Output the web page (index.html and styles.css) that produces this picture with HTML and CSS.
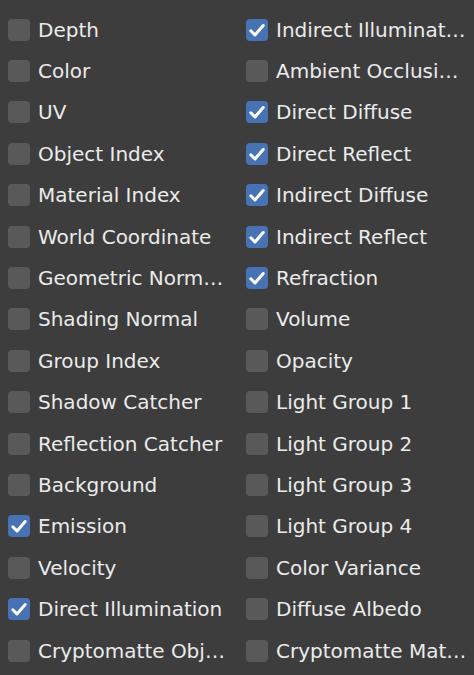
FILE: index.html
```html
<!DOCTYPE html>
<html>
<head>
<meta charset="utf-8">
<link rel="stylesheet" href="styles.css">
</head>
<body>
<div class="panel">
  <div class="col">
    <div class="row"><span class="box"></span><span class="label">Depth</span></div>
    <div class="row"><span class="box"></span><span class="label">Color</span></div>
    <div class="row"><span class="box"></span><span class="label">UV</span></div>
    <div class="row"><span class="box"></span><span class="label">Object Index</span></div>
    <div class="row"><span class="box"></span><span class="label">Material Index</span></div>
    <div class="row"><span class="box"></span><span class="label">World Coordinate</span></div>
    <div class="row"><span class="box"></span><span class="label">Geometric Norm…</span></div>
    <div class="row"><span class="box"></span><span class="label">Shading Normal</span></div>
    <div class="row"><span class="box"></span><span class="label">Group Index</span></div>
    <div class="row"><span class="box"></span><span class="label">Shadow Catcher</span></div>
    <div class="row"><span class="box"></span><span class="label">Reflection Catcher</span></div>
    <div class="row"><span class="box"></span><span class="label">Background</span></div>
    <div class="row"><span class="box on"><svg viewBox="0 0 22 22"><path d="M4.8 11.8 L9 16 L17.2 6.5"/></svg></span><span class="label">Emission</span></div>
    <div class="row"><span class="box"></span><span class="label">Velocity</span></div>
    <div class="row"><span class="box on"><svg viewBox="0 0 22 22"><path d="M4.8 11.8 L9 16 L17.2 6.5"/></svg></span><span class="label">Direct Illumination</span></div>
    <div class="row"><span class="box"></span><span class="label">Cryptomatte Obj…</span></div>
  </div>
  <div class="col">
    <div class="row"><span class="box on"><svg viewBox="0 0 22 22"><path d="M4.8 11.8 L9 16 L17.2 6.5"/></svg></span><span class="label">Indirect Illuminat…</span></div>
    <div class="row"><span class="box"></span><span class="label">Ambient Occlusi…</span></div>
    <div class="row"><span class="box on"><svg viewBox="0 0 22 22"><path d="M4.8 11.8 L9 16 L17.2 6.5"/></svg></span><span class="label">Direct Diffuse</span></div>
    <div class="row"><span class="box on"><svg viewBox="0 0 22 22"><path d="M4.8 11.8 L9 16 L17.2 6.5"/></svg></span><span class="label">Direct Reflect</span></div>
    <div class="row"><span class="box on"><svg viewBox="0 0 22 22"><path d="M4.8 11.8 L9 16 L17.2 6.5"/></svg></span><span class="label">Indirect Diffuse</span></div>
    <div class="row"><span class="box on"><svg viewBox="0 0 22 22"><path d="M4.8 11.8 L9 16 L17.2 6.5"/></svg></span><span class="label">Indirect Reflect</span></div>
    <div class="row"><span class="box on"><svg viewBox="0 0 22 22"><path d="M4.8 11.8 L9 16 L17.2 6.5"/></svg></span><span class="label">Refraction</span></div>
    <div class="row"><span class="box"></span><span class="label">Volume</span></div>
    <div class="row"><span class="box"></span><span class="label">Opacity</span></div>
    <div class="row"><span class="box"></span><span class="label">Light Group 1</span></div>
    <div class="row"><span class="box"></span><span class="label">Light Group 2</span></div>
    <div class="row"><span class="box"></span><span class="label">Light Group 3</span></div>
    <div class="row"><span class="box"></span><span class="label">Light Group 4</span></div>
    <div class="row"><span class="box"></span><span class="label">Color Variance</span></div>
    <div class="row"><span class="box"></span><span class="label">Diffuse Albedo</span></div>
    <div class="row"><span class="box"></span><span class="label">Cryptomatte Mat…</span></div>
  </div>
</div>
</body>
</html>
```
FILE: styles.css
```css
html, body {
  margin: 0;
  padding: 0;
  background: #3d3d3d;
  width: 474px;
  height: 675px;
  overflow: hidden;
}
.panel {
  display: grid;
  grid-template-columns: 238px 236px;
  padding: 9px 0 0 8px;
  font-family: "DejaVu Sans", sans-serif;
  font-size: 20px;
  color: #ebebeb;
}
.col {
  display: flex;
  flex-direction: column;
}
.row {
  height: 41.4px;
  display: flex;
  align-items: center;
  white-space: nowrap;
}
.box {
  width: 22px;
  height: 22px;
  border-radius: 4px;
  background: #595959;
  flex: none;
  margin-right: 8px;
  display: flex;
}
.box.on {
  background: #4772b3;
}
.box svg {
  width: 22px;
  height: 22px;
}
.box svg path {
  fill: none;
  stroke: #ffffff;
  stroke-width: 3;
  stroke-linecap: round;
  stroke-linejoin: round;
}
.label {
  line-height: 1;
}
```
